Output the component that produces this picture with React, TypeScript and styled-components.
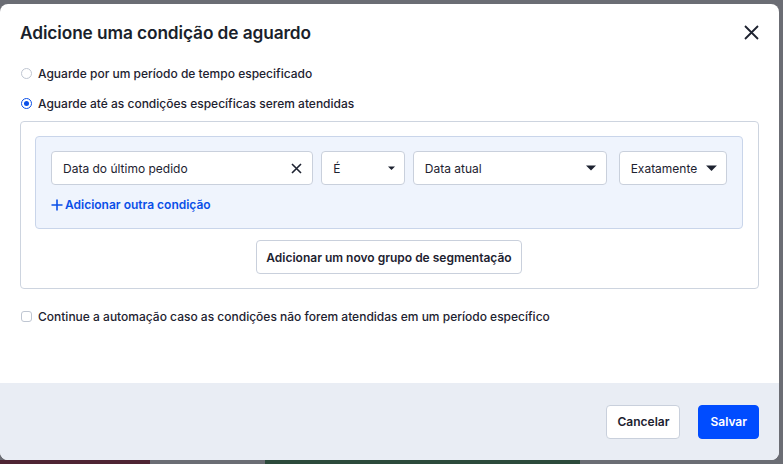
import styled, { createGlobalStyle } from "styled-components";

const Global = createGlobalStyle`
  html, body { margin: 0; padding: 0; }
  body {
    width: 783px;
    height: 464px;
    overflow: hidden;
    font-family: Inter, "Noto Sans", "Liberation Sans", sans-serif;
    color: #1d2230;
  }
`;

const Backdrop = styled.div`
  width: 783px;
  height: 464px;
  box-sizing: border-box;
  padding: 4px 4px 4px 0;
  background:
    linear-gradient(to right, #4e2433 0 150px, #6b6d74 150px 265px, #2c4a3b 265px 580px, #6b6d74 580px) bottom / 100% 4px no-repeat,
    #6b6d74;
  display: flex;
`;

const Modal = styled.div`
  flex: 1;
  background: #fff;
  border-radius: 8px;
  overflow: hidden;
  display: flex;
  flex-direction: column;
`;

const Header = styled.div`
  display: flex;
  align-items: center;
  justify-content: space-between;
  padding: 16px 20px 0 20px;
  height: 24px;
`;

const Title = styled.h2`
  margin: 0;
  font-size: 17.3px;
  font-weight: 600;
  letter-spacing: -0.1px;
  color: #1a1f2b;
`;

const CloseButton = styled.button`
  border: none;
  background: none;
  padding: 0;
  width: 15px;
  height: 15px;
  display: flex;
  cursor: pointer;
`;

const Body = styled.div`
  flex: 1;
  padding: 21px 20px 0 20px;
`;

const OptionRow = styled.label<{ $mb?: number }>`
  display: flex;
  align-items: center;
  gap: 6px;
  height: 16px;
  font-size: 12px;
  font-weight: 500;
  color: #1d2230;
  margin-bottom: ${(p) => p.$mb ?? 0}px;
`;

const Radio = styled.span<{ $checked?: boolean }>`
  width: 11px;
  height: 11px;
  box-sizing: border-box;
  margin-left: 1px;
  border-radius: 50%;
  border: 1px solid ${(p) => (p.$checked ? "#0a4fe8" : "#bfc6d2")};
  display: flex;
  align-items: center;
  justify-content: center;
  &::after {
    content: "";
    width: 5px;
    height: 5px;
    border-radius: 50%;
    background: ${(p) => (p.$checked ? "#0a4fe8" : "transparent")};
  }
`;

const Checkbox = styled.span`
  width: 11px;
  height: 11px;
  box-sizing: border-box;
  margin-left: 1px;
  border-radius: 3px;
  border: 1px solid #bfc6d2;
`;

const SegmentBox = styled.div`
  border: 1px solid #cdd4df;
  border-radius: 4px;
  padding: 14px 15px 14px 14px;
  margin-bottom: 19px;
  display: flex;
  flex-direction: column;
  align-items: center;
`;

const Group = styled.div`
  align-self: stretch;
  background: #eff4fd;
  border: 1px solid #c9d5ea;
  border-radius: 4px;
  padding: 14px 15px 15px 15px;
  height: 62px;
`;

const ConditionRow = styled.div`
  display: flex;
  align-items: center;
`;

const Field = styled.div<{ $w: number; $ml?: number }>`
  width: ${(p) => p.$w}px;
  height: 34px;
  box-sizing: border-box;
  margin-left: ${(p) => p.$ml ?? 0}px;
  background: #fff;
  border: 1px solid #c9d0dc;
  border-radius: 4px;
  display: flex;
  align-items: center;
  justify-content: space-between;
  padding: 0 ${(p) => (p.$w < 120 ? 9 : 10)}px 0 11px;
  font-size: 12px;
  color: #1d2230;
`;

const AddLink = styled.button`
  margin-top: 12px;
  border: none;
  background: none;
  padding: 0;
  display: flex;
  align-items: center;
  gap: 2px;
  font-family: inherit;
  font-size: 12px;
  font-weight: 600;
  color: #0a4fe8;
  cursor: pointer;
`;

const Button = styled.button<{ $primary?: boolean }>`
  height: 34px;
  box-sizing: border-box;
  border-radius: 4px;
  font-family: inherit;
  font-size: 12px;
  font-weight: 600;
  cursor: pointer;
  padding: 0 ${(p) => (p.$primary ? 11 : 10)}px;
  border: 1px solid ${(p) => (p.$primary ? "#004cff" : "#c9d0dc")};
  background: ${(p) => (p.$primary ? "#004cff" : "#fff")};
  color: ${(p) => (p.$primary ? "#fff" : "#1d2230")};
`;

const GroupButton = styled(Button)`
  margin-top: 11px;
  padding: 0 9px;
`;

const Footer = styled.div`
  height: 77px;
  box-sizing: border-box;
  background: #e9edf4;
  display: flex;
  justify-content: flex-end;
  align-items: center;
  gap: 18px;
  padding: 0 20px;
`;

const Caret = ({ w }: { w: number }) => (
  <svg width={w} height={w / 2 + 1} viewBox="0 0 10 6">
    <path d="M0 0.5h10L5 5.5z" fill="#1d2230" />
  </svg>
);

export default function App() {
  return (
    <>
      <Global />
      <Backdrop>
        <Modal>
          <Header>
            <Title>Adicione uma condição de aguardo</Title>
            <CloseButton aria-label="Fechar">
              <svg width="15" height="15" viewBox="0 0 15 15">
                <path d="M1 1l13 13M14 1L1 14" stroke="#1d2230" strokeWidth="1.8" />
              </svg>
            </CloseButton>
          </Header>
          <Body>
            <OptionRow $mb={14}>
              <Radio />
              Aguarde por um período de tempo especificado
            </OptionRow>
            <OptionRow $mb={10}>
              <Radio $checked />
              Aguarde até as condições específicas serem atendidas
            </OptionRow>
            <SegmentBox>
              <Group>
                <ConditionRow>
                  <Field $w={264}>
                    Data do último pedido
                    <svg width="11" height="11" viewBox="0 0 11 11">
                      <path d="M1 1l9 9M10 1L1 10" stroke="#1d2230" strokeWidth="1.6" />
                    </svg>
                  </Field>
                  <Field $w={84} $ml={8}>
                    É
                    <Caret w={7} />
                  </Field>
                  <Field $w={195} $ml={8}>
                    Data atual
                    <Caret w={10} />
                  </Field>
                  <Field $w={109} $ml={12}>
                    Exatamente
                    <Caret w={11} />
                  </Field>
                </ConditionRow>
                <AddLink>
                  <svg width="12" height="12" viewBox="0 0 12 12">
                    <path d="M6 0.5v11M0.5 6h11" stroke="#0a4fe8" strokeWidth="1.6" />
                  </svg>
                  Adicionar outra condição
                </AddLink>
              </Group>
              <GroupButton>Adicionar um novo grupo de segmentação</GroupButton>
            </SegmentBox>
            <OptionRow>
              <Checkbox />
              Continue a automação caso as condições não forem atendidas em um período específico
            </OptionRow>
          </Body>
          <Footer>
            <Button>Cancelar</Button>
            <Button $primary>Salvar</Button>
          </Footer>
        </Modal>
      </Backdrop>
    </>
  );
}
